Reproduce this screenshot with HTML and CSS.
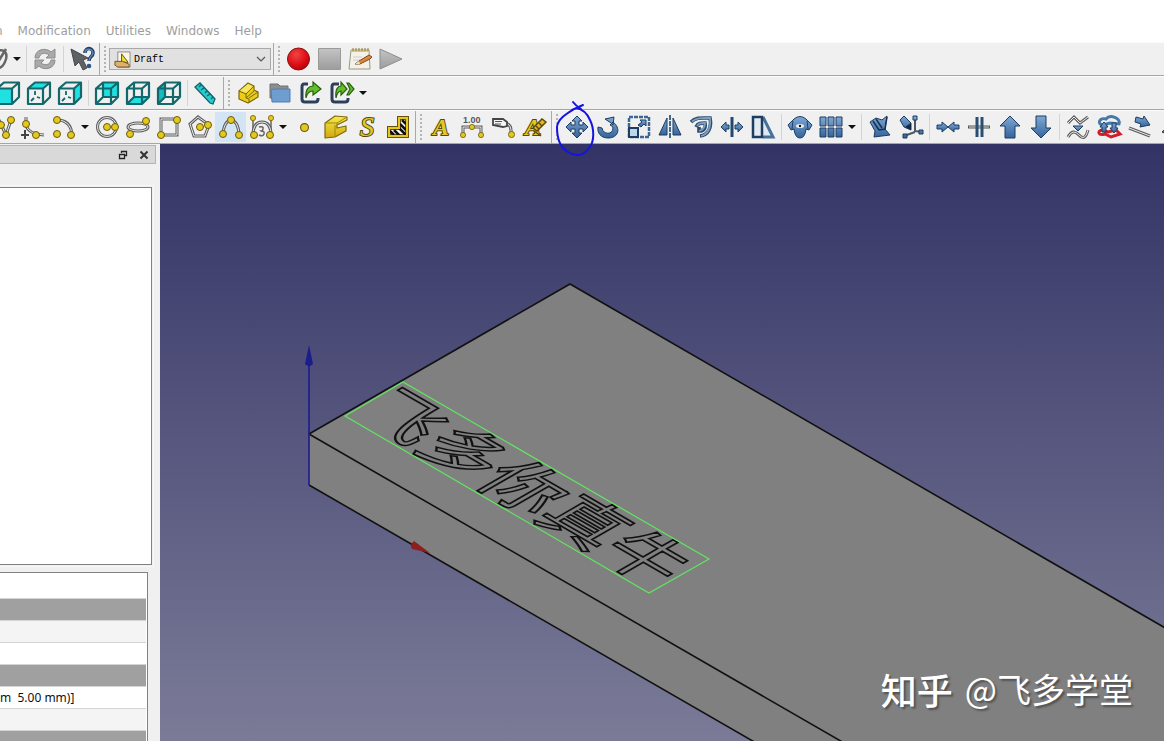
FILE: index.html
```html
<!DOCTYPE html>
<html lang="en">
<head>
<meta charset="utf-8">
<title>Draft workbench</title>
<link rel="stylesheet" href="styles.css">
</head>
<body>
<svg class="defs" aria-hidden="true">
  <defs>
    <symbol id="node" viewBox="0 0 8 8"><circle cx="4" cy="4" r="3.500" fill="#e3c81f" stroke="#6b5a0b" stroke-width="1"/></symbol>
    <symbol id="frame" viewBox="0 0 26 26"><path d="M2 8.500H17V24H2ZM9 2.500H24V17H9ZM2 8.500L9 2.500M17 8.500L24 2.500M17 24L24 17M2 24L9 17" fill="none" stroke="#12686a" stroke-width="2.200" stroke-linejoin="round"/></symbol>
    <symbol id="shell" viewBox="0 0 26 26"><path d="M2 8.500H17V24H2ZM2 8.500L9 2.500H24V17L17 24M17 8.500L24 2.500" fill="none" stroke="#12686a" stroke-width="2.200" stroke-linejoin="round"/></symbol>
    <linearGradient id="sky" x1="0" y1="0" x2="0" y2="1"><stop offset="0" stop-color="#333366"/><stop offset="1" stop-color="#7b7b98"/></linearGradient>
    <linearGradient id="steel" x1="0" y1="0" x2="0" y2="1"><stop offset="0" stop-color="#7fa9d6"/><stop offset="1" stop-color="#34649c"/></linearGradient>
    <linearGradient id="gold" x1="0" y1="0" x2="0" y2="1"><stop offset="0" stop-color="#f7e94a"/><stop offset="1" stop-color="#d0a80c"/></linearGradient>
    <linearGradient id="grey" x1="0" y1="0" x2="0" y2="1"><stop offset="0" stop-color="#c4c4c4"/><stop offset="1" stop-color="#9c9c9c"/></linearGradient>
    <radialGradient id="red" cx=".4" cy=".3" r=".8"><stop offset="0" stop-color="#f04444"/><stop offset=".6" stop-color="#dc0d14"/><stop offset="1" stop-color="#a80008"/></radialGradient>
  </defs>
</svg>

<div class="app">
  <nav class="menubar">
    <button class="menu menu-first">n</button>
    <button class="menu">Modification</button>
    <button class="menu">Utilities</button>
    <button class="menu">Windows</button>
    <button class="menu">Help</button>
  </nav>

  <div class="toolbar bar-file">
    <button class="tool" aria-label="Undo"><svg viewBox="0 0 26 26"><path d="M13 6C19 2 25 5 23 13C21 20 17 24 11 21M23 3L15 16" fill="none" stroke="#666" stroke-width="2.500"/></svg></button>
    <button class="more" aria-label="Undo history"></button>
    <span class="sep"></span>
    <button class="tool" aria-label="Refresh"><svg viewBox="0 0 26 26"><path d="M3 12C3 3 14 1 19 6L23 3V12H14L17 9C13 6 8 7 7 12Z" fill="#aaa" stroke="#8c8c8c"/><path d="M23 14C23 23 12 25 7 20L3 23V14H12L9 17C13 20 18 19 19 14Z" fill="#aaa" stroke="#8c8c8c"/></svg></button>
    <span class="sep"></span>
    <button class="tool" aria-label="What's this"><svg viewBox="0 0 26 26"><path d="M2 3L6 20L10 16L14 24L18 22L14 14L19 12Z" fill="#5e6264" stroke="#46494b"/><path d="M16 7C16 1 24 1 24 7C24 11 20 10 20 15" fill="none" stroke="#213c60" stroke-width="3.500"/><path d="M16 7C16 2 23 2 24 7C24 10 20 10 20 15" fill="none" stroke="#6189b8" stroke-width="1.300"/><circle cx="20" cy="20" r="2.300" fill="#315680"/></svg></button>
    <span class="handle"></span>
    <label class="workbench">
      <svg viewBox="0 0 18 18"><path d="M4 1H17V17H4Z" fill="#f7f6e9" stroke="#888"/><path d="M8 3V12H15Z" fill="#f1dc27" stroke="#635411"/><path d="M1 11H9L16 14V17H4L1 15Z" fill="#ddb36c" stroke="#76501e"/></svg>
      <select aria-label="Workbench"><option>Draft</option></select>
      <svg class="chevron" viewBox="0 0 10 6"><path d="M1 1L5 5L9 1" fill="none" stroke="#555" stroke-width="1.200"/></svg>
    </label>
    <span class="handle"></span>
    <button class="tool" aria-label="Record macro"><svg viewBox="0 0 26 26"><circle cx="12.500" cy="13" r="11" fill="url(#red)" stroke="#8d1014"/></svg></button>
    <button class="tool" aria-label="Stop macro"><svg viewBox="0 0 26 26"><path d="M1.500 2.500H23.500V23.500H1.500Z" fill="url(#grey)" stroke="#9a9a9a"/></svg></button>
    <button class="tool" aria-label="Macros"><svg viewBox="0 0 26 26"><path d="M3 4H21L22 23H1Z" fill="#f4f2e8" stroke="#999783"/><path d="M3 3H21V6H3Z" fill="#d8c67d"/><path d="M5 2V5M8 2V5M11 2V5M14 2V5M17 2V5M20 2V5" stroke="#8a7b4c"/><path d="M5 11H14M5 14H12" stroke="#ccc"/><path d="M7 18L11 15L21 9L24 11L22 13L12 18Z" fill="#d9883e" stroke="#7f4920"/><path d="M7 18L11 15L12 18Z" fill="#eee0b7"/></svg></button>
    <button class="tool" aria-label="Run macro"><svg viewBox="0 0 26 26"><path d="M1 3L23 13L1 23Z" fill="url(#grey)" stroke="#8d8d8d"/></svg></button>
  </div>

  <div class="toolbar bar-view">
    <button class="tool" aria-label="Front"><svg viewBox="0 0 26 26"><path d="M2 8.500H17V24H2Z" fill="#21e0e2"/><use href="#shell"/></svg></button>
    <button class="tool" aria-label="Top"><svg viewBox="0 0 26 26"><path d="M2 8.500L9 2.500H24L17 8.500Z" fill="#21e0e2"/><use href="#shell"/><path d="M9 11V15M5 21L8 18M11 17L14 18" stroke="#12686a" stroke-width="1.800"/></svg></button>
    <button class="tool" aria-label="Right"><svg viewBox="0 0 26 26"><path d="M17 8.500L24 2.500V17L17 24Z" fill="#21e0e2"/><use href="#shell"/><path d="M9 11V15M5 21L8 18M11 17L14 18" stroke="#12686a" stroke-width="1.800"/></svg></button>
    <span class="sep"></span>
    <button class="tool" aria-label="Rear"><svg viewBox="0 0 26 26"><path d="M9 2.500H24V17H9Z" fill="#21dfe1"/><use href="#frame"/></svg></button>
    <button class="tool" aria-label="Bottom"><svg viewBox="0 0 26 26"><path d="M2 24L9 17H24L17 24Z" fill="#21dfe1"/><use href="#frame"/></svg></button>
    <button class="tool" aria-label="Left"><svg viewBox="0 0 26 26"><path d="M2 8.500L9 2.500V17L2 24Z" fill="#18b9bb"/><use href="#frame"/></svg></button>
    <span class="sep"></span>
    <button class="tool" aria-label="Measure"><svg viewBox="0 0 26 26"><path d="M2 7L7 3L22 19L20 24L17 23Z" fill="#27cbd0" stroke="#0b666b" stroke-width="1.300"/><path d="M8 5L6 7M11 8L8 10M14 11L12 13M17 14L14 16M20 17L18 19" stroke="#0b666b" stroke-width="1.300"/></svg></button>
    <span class="handle"></span>
    <button class="tool" aria-label="Part"><svg viewBox="0 0 26 26"><path d="M3 11L12 3L18 6V10L22 12V17L12 23L3 19Z" fill="#edcd1c" stroke="#7a680f" stroke-width="1.200" stroke-linejoin="round"/><path d="M4 10.500L12 4L17 6.500L10 13Z" fill="#f7e65d"/><path d="M3 11L10 14V18L13 19V23M10 14L18 6M13 18L22 12M10 18L18 11" fill="none" stroke="#7a680f"/></svg></button>
    <button class="tool" aria-label="Group"><svg viewBox="0 0 26 26"><path d="M3 4H11L13 6H21V18H3Z" fill="#8d8d8d" stroke="#707070"/><path d="M4 10L7 9H23V22H5Z" fill="#6e9dd0" stroke="#4f7fb3"/></svg></button>
    <button class="tool" aria-label="Link"><svg viewBox="0 0 26 26"><path d="M10 4H6Q4 4 4 7V19Q4 22 7 22H17Q20 22 20 19V18" fill="none" stroke="#2c405c" stroke-width="3"/><path d="M8 18C7 9 11 6 15 6V2L23 9L15 15V11C11 11 9 13 8 18Z" fill="#65bd2c" stroke="#26600d" stroke-width="1.200"/></svg></button>
    <button class="tool" aria-label="Link actions"><svg viewBox="0 0 26 26"><path d="M10 4H5Q3 4 3 7V19Q3 22 6 22H16Q19 22 19 19V18" fill="none" stroke="#2c405c" stroke-width="3"/><path d="M7 18C6 9 9 6 12 6V2L18 9L12 15V11C9 11 8 13 7 18ZM18 3L20 3L25 9L20 15H18L21 9Z" fill="#65bd2c" stroke="#26600d" stroke-width="1.200"/></svg></button>
    <button class="more" aria-label="More link actions"></button>
  </div>

  <div class="toolbar bar-draft">
    <button class="tool" aria-label="Wire"><svg viewBox="0 0 26 26"><path class="tube" d="M10 6L17 21L22 6"/><path class="core" d="M10 6L17 21L22 6"/><use href="#node" x="13" y="17" width="8" height="8"/><use href="#node" x="18" y="2" width="8" height="8"/><use href="#node" x="8" y="7" width="8" height="8"/></svg></button>
    <button class="tool" aria-label="Fillet"><svg viewBox="0 0 26 26"><path class="tube" d="M6 3V11Q8 20 24 21"/><path class="core" d="M6 3V11Q8 20 24 21"/><path d="M5 16V25M1 21H9" stroke="#444" stroke-width="2"/><use href="#node" x="2" y="6" width="8" height="8"/><use href="#node" x="12" y="17" width="8" height="8"/></svg></button>
    <button class="tool" aria-label="Arc"><svg viewBox="0 0 26 26"><path class="tube" d="M6 6Q20 6 21 21"/><path class="core" d="M6 6Q20 6 21 21"/><use href="#node" x="2" y="2" width="8" height="8"/><use href="#node" x="2" y="16" width="8" height="8"/><use href="#node" x="16" y="17" width="8" height="8"/></svg></button>
    <button class="more" aria-label="Arc tools"></button>
    <button class="tool" aria-label="Circle"><svg viewBox="0 0 26 26"><circle class="tube" cx="13" cy="13" r="9.500"/><circle class="core" cx="13" cy="13" r="9.500"/><use href="#node" x="9" y="9" width="8" height="8"/><use href="#node" x="17" y="9" width="8" height="8"/></svg></button>
    <button class="tool" aria-label="Ellipse"><svg viewBox="0 0 26 26"><ellipse class="tube" cx="13" cy="13" rx="10" ry="4"/><ellipse class="core" cx="13" cy="13" rx="10" ry="4"/><use href="#node" x="17" y="3" width="8" height="8"/><use href="#node" x="1" y="16" width="8" height="8"/></svg></button>
    <button class="tool" aria-label="Rectangle"><svg viewBox="0 0 26 26"><path class="tube" d="M5 5H21V21H5Z"/><path class="core" d="M5 5H21V21H5Z"/><use href="#node" x="17" y="2" width="8" height="8"/><use href="#node" x="1" y="17" width="8" height="8"/></svg></button>
    <button class="tool" aria-label="Polygon"><svg viewBox="0 0 26 26"><path class="tube" d="M11 3L22 11L18 22H7L3 10Z"/><path class="core" d="M11 3L22 11L18 22H7L3 10Z"/><use href="#node" x="9" y="9" width="8" height="8"/><use href="#node" x="17" y="7" width="8" height="8"/></svg></button>
    <button class="tool tool-on" aria-label="B-spline"><svg viewBox="0 0 26 26"><path class="tube" d="M5 20Q6 7 13 6Q20 7 21 20"/><path class="core" d="M5 20Q6 7 13 6Q20 7 21 20"/><use href="#node" x="9" y="2" width="8" height="8"/><use href="#node" x="1" y="16" width="8" height="8"/><use href="#node" x="17" y="17" width="8" height="8"/></svg></button>
    <button class="tool" aria-label="Bezier"><svg viewBox="0 0 26 26"><path d="M4 4V21M22 4V21" stroke="#666" stroke-width="1.500"/><path class="tube" d="M4 21Q4 8 13 8Q22 8 22 21"/><path class="core" d="M4 21Q4 8 13 8Q22 8 22 21"/><path d="M10 13Q15 12 14 15T12 17Q16 17 15 20T10 21" fill="none" stroke="#666" stroke-width="1.500"/><use href="#node" x="1" y="1" width="6" height="6"/><use href="#node" x="19" y="1" width="6" height="6"/><use href="#node" x="1" y="17" width="8" height="8"/><use href="#node" x="17" y="17" width="8" height="8"/></svg></button>
    <button class="more" aria-label="Bezier tools"></button>
    <button class="tool" aria-label="Point"><svg viewBox="0 0 26 26"><use href="#node" x="8" y="9" width="9" height="9"/></svg></button>
    <button class="tool" aria-label="Facebinder"><svg viewBox="0 0 26 26"><path d="M2 9L12 2L24 3V6L14 11V14L23 12V17L12 23L2 24Z" fill="url(#gold)" stroke="#7d6a10" stroke-width="1.200" stroke-linejoin="round"/><path d="M2 9L14 9L24 3M14 9V11M12 23V11" fill="none" stroke="#a18611"/></svg></button>
    <button class="tool" aria-label="Shape from text"><svg viewBox="0 0 26 26"><text class="letter letter-thin" x="6" y="22">S</text></svg></button>
    <button class="tool" aria-label="Hatch"><svg viewBox="0 0 26 26"><path d="M14 4H22V22H4V14H14Z" fill="#fff" stroke="#65540b" stroke-width="4"/><path d="M17 6L21 10M15 10L21 16M14 14L21 21M9 16L15 22M5 17L9 21" stroke="#111" stroke-width="2.500"/><path d="M14 4H22V22H4V14H14Z" fill="none" stroke="#e5c720" stroke-width="2"/></svg></button>
    <span class="handle"></span>
    <button class="tool" aria-label="Text"><svg viewBox="0 0 26 26"><text class="letter" x="5" y="21">A</text></svg></button>
    <button class="tool" aria-label="Dimension"><svg viewBox="0 0 26 26"><text class="tiny" x="4" y="9">1.00</text><path class="tube" d="M4 21V13H22V21"/><path class="core" d="M4 21V13H22V21"/><use href="#node" x="10" y="10" width="6" height="6"/><use href="#node" x="1" y="18" width="6" height="6"/><use href="#node" x="19" y="18" width="6" height="6"/></svg></button>
    <button class="tool" aria-label="Label"><svg viewBox="0 0 26 26"><path class="tube" d="M15 9Q22 10 21 20"/><path class="core" d="M15 9Q22 10 21 20"/><path d="M3 5H13L17 8V12L13 13L3 11Z" fill="#f4f4f4" stroke="#444" stroke-width="1.800"/><path d="M5 7.500H12M5 10H11" stroke="#555"/><use href="#node" x="18" y="17" width="7" height="7"/></svg></button>
    <button class="tool" aria-label="Annotation styles"><svg viewBox="0 0 26 26"><text class="letter" x="4" y="21">A</text><path d="M12 14L21 5L25 8L16 17Z" fill="#ddb727" stroke="#584807" stroke-width="1.400"/><path d="M15 12L18 15M18 9L21 12M13 17L20 22" stroke="#584807" stroke-width="1.400"/></svg></button>
    <span class="handle"></span>
    <button class="tool" aria-label="Move"><svg viewBox="0 0 26 26"><path class="steel" d="M13 2L18 7H15V11H19V8L24 13L19 18V15H15V19H18L13 24L8 19H11V15H7V18L2 13L7 8V11H11V7H8Z"/></svg></button>
    <button class="tool" aria-label="Rotate"><svg viewBox="0 0 26 26"><path class="steel" d="M10 5L19 3L18 11L16 9ZM18 8C26 14 24 24 13 24C6 24 2 19 3 13L7 14C8 21 18 21 18 14Q18 12 15 11Z"/></svg></button>
    <button class="tool" aria-label="Scale"><svg viewBox="0 0 26 26"><path d="M3 3H23V23H3Z" fill="none" stroke="#3c6794" stroke-width="2.500" stroke-dasharray="4 1"/><path d="M3 14H12V23H3Z" fill="#c0d5ea" stroke="#1c3d62" stroke-width="2"/><path class="steel" d="M12 11L16 8L14 6H20V12L18 10L15 13Z"/></svg></button>
    <button class="tool" aria-label="Mirror"><svg viewBox="0 0 26 26"><path class="steel" d="M10 4V21H2ZM16 4V21H24Z"/><path d="M13 1V25" stroke="#3f688f" stroke-width="2" stroke-dasharray="5 1"/></svg></button>
    <button class="tool" aria-label="Offset"><svg viewBox="0 0 26 26"><path d="M3 8C8 3 14 4 22 4C24 14 20 21 12 22M8 13C10 9 13 9 17 9C18 14 16 17 11 17L11 13" fill="none" stroke="#2b4a6c" stroke-width="3.600"/><path d="M4 7.500C9 3.500 14 4 22 4C23 14 20 20 13 22M9 12C11 9 13 9 17 9C17 14 15 16 11 17" fill="none" stroke="#7f9fc0" stroke-width="1.800"/></svg></button>
    <button class="tool" aria-label="Trimex"><svg viewBox="0 0 26 26"><path d="M13 3V23" stroke="#23486e" stroke-width="3"/><path class="steel" d="M2 13L7 8V11H10V15H7V18ZM24 13L19 8V11H16V15H19V18Z"/></svg></button>
    <button class="tool" aria-label="Stretch"><svg viewBox="0 0 26 26"><path d="M13 3L23 23H13" fill="#dfe8f1" stroke="#46719d" stroke-width="3"/><path d="M3 3H12V23H3Z" fill="#e4eaf1" stroke="#1d3d61" stroke-width="2.500"/></svg></button>
    <span class="sep"></span>
    <button class="tool" aria-label="Clone"><svg viewBox="0 0 26 26"><path class="steel" d="M7 5Q13 0 19 5L25 11L22 16L19 15Q18 24 13 24T7 15L4 16L1 11Z"/><path d="M6 7L5 15M20 7L21 15" stroke="#1f416a"/><ellipse cx="13" cy="12" rx="4" ry="2" fill="#eee"/><circle cx="13" cy="12" r="1.200" fill="#111"/></svg></button>
    <button class="tool" aria-label="Array"><svg viewBox="0 0 26 26"><path class="steel" d="M2 3H8V12H2ZM10 3H16V12H10ZM18 3H24V12H18ZM2 14H8V23H2ZM10 14H16V23H10ZM18 14H24V23H18Z"/></svg></button>
    <button class="more" aria-label="Array tools"></button>
    <span class="sep"></span>
    <button class="tool" aria-label="Edit"><svg viewBox="0 0 26 26"><path class="steel" d="M20 2L18 15L23 21L7 23L8 17L3 8L9 4L15 6Z"/><path d="M9 5L15 14M6 7L12 16M20 3L18 15L12 16" fill="none" stroke="#17304e" stroke-width="1.500"/></svg></button>
    <button class="tool" aria-label="Subelement"><svg viewBox="0 0 26 26"><path d="M17 4V17L23 18M17 18L6 22" fill="none" stroke="#4d5964" stroke-width="2"/><path class="steel" d="M2 6L6 2L13 9L13 16L6 13Z"/><path d="M7 13L13 9L13 16Z" fill="#142942"/><path class="steel" d="M15 2H19V6H15ZM21 16H25V20H21ZM5 20H9V24H5Z"/></svg></button>
    <span class="sep"></span>
    <button class="tool" aria-label="Join"><svg viewBox="0 0 26 26"><path class="steel" d="M2 11H7V8L13 13L19 8V11H24V15H19V18L13 13L7 18V15H2Z"/></svg></button>
    <button class="tool" aria-label="Split"><svg viewBox="0 0 26 26"><path d="M2 13H24" stroke="#555" stroke-width="3"/><path d="M3 13H23" stroke="#ddd"/><path d="M11 3V23M16 3V23" stroke="#294e76" stroke-width="3"/></svg></button>
    <button class="tool" aria-label="Upgrade"><svg viewBox="0 0 26 26"><path class="steel" d="M13 2L23 12H18V24H8V12H3Z"/></svg></button>
    <button class="tool" aria-label="Downgrade"><svg viewBox="0 0 26 26"><path class="steel" d="M13 24L3 14H8V2H18V14H23Z"/></svg></button>
    <span class="sep"></span>
    <button class="tool" aria-label="Wire to B-spline"><svg viewBox="0 0 26 26"><path class="tube" d="M3 9L9 3L15 9L23 3M3 23Q8 14 14 21T23 16"/><path class="core" d="M3 9L9 3L15 9L23 3M3 23Q8 14 14 21T23 16"/><path class="steel" d="M8 12H18L13 17Z"/></svg></button>
    <button class="tool" aria-label="Draft to sketch"><svg viewBox="0 0 26 26"><path d="M7 11C0 10 4 3 10 5C14 0 25 4 23 10L14 9L7 11" fill="none" stroke="#4778a9" stroke-width="3"/><path d="M6 16C1 17 2 22 9 20L15 23L24 20L20 16L12 18Z" fill="none" stroke="#d11d26" stroke-width="3"/><path class="steel" d="M8 8L12 13H10V18H6V13H4ZM18 19L14 14H16V9H20V14H22Z"/></svg></button>
    <button class="tool" aria-label="Slope"><svg viewBox="0 0 26 26"><path class="tube" d="M2 14L23 22"/><path class="core" d="M2 14L23 22"/><path class="steel" d="M9 3L16 5L17 2L23 11L13 13L14 10L8 8Z"/></svg></button>
    <button class="tool" aria-label="Flip dimension"><svg viewBox="0 0 26 26"><path class="steel" d="M6 8L11 3V10H8ZM4 18L9 13L13 22Z"/></svg></button>
  </div>

  <main class="work">
    <aside class="side">
      <header class="dock">
        <button class="dock-btn" aria-label="Float"><svg viewBox="0 0 10 10"><path d="M3.500 3V1.500H8.500V5.500H7M1.500 4.500H6.500V8.500H1.500Z" fill="none" stroke="#222" stroke-width="1.300"/></svg></button>
        <button class="dock-btn" aria-label="Close"><svg viewBox="0 0 10 10"><path d="M1.500 1.500L8.500 8.500M8.500 1.500L1.500 8.500" stroke="#333" stroke-width="2"/></svg></button>
      </header>
      <div class="tree"></div>
      <div class="props">
        <table>
          <tbody>
            <tr class="blank"><td></td></tr>
            <tr class="group"><td></td></tr>
            <tr class="alt"><td></td></tr>
            <tr><td></td></tr>
            <tr class="group"><td></td></tr>
            <tr><td>m&nbsp; 5.00 mm)]</td></tr>
            <tr class="alt"><td></td></tr>
            <tr class="group"><td></td></tr>
          </tbody>
        </table>
      </div>
    </aside>

    <section class="view">
      <svg class="scene" viewBox="160 144 1004 597" preserveAspectRatio="xMinYMin slice">
        <path d="M160 144H1164V741H160Z" fill="url(#sky)"/>
        <path d="M570 284L1174 633V751H770L309 485V434Z" fill="#808080"/>
        <path d="M309 434L570 284L1174 633M309 434L858 751M309 485L770 751" fill="none" stroke="#111" stroke-width="1.600"/>
        <path d="M309 485V360" stroke="#1c1c8c" stroke-width="1.600"/>
        <path d="M309 345L313 364Q309 368 305 364Z" fill="#1c1c8c"/>
        <path d="M414 541L430 553L412 549Q409 545 414 541Z" fill="#8c2020"/>
        <text class="engraved" transform="matrix(.866 .5 -.866 .5 345 416)" x="0" y="-7">飞多你真牛</text>
        <path d="M345 416L403 382L709 559L649 593Z" fill="none" stroke="#5fe65f" stroke-width="1.200"/>
      </svg>
      <p class="credit"><b>知乎</b><span>@飞多学堂</span></p>
    </section>
  </main>

  <svg class="pen" viewBox="0 0 44 60" aria-hidden="true"><path d="M18 4Q21 8 26 11M17 12L28 7M21 10C13 15 3 20 2 29C2 38 4 49 13 54C20 59 29 58 34 50C40 43 39 30 35 22C32 15 27 11 21 10" fill="none" stroke="#1414e0" stroke-width="2" stroke-linecap="round"/></svg>
</div>
</body>
</html>
```
FILE: styles.css
```css
* { box-sizing: border-box; }
body {
  margin: 0;
  background: #f0f0f0;
  font-family: "Noto Sans", "Noto Sans CJK SC", sans-serif;
  font-size: 12px;
  color: #111;
}
button {
  padding: 0;
  border: 0;
  background: none;
  font: inherit;
  color: inherit;
}
.defs { position: absolute; width: 0; height: 0; }
.app {
  position: relative;
  display: flex;
  flex-direction: column;
  height: 100vh;
  overflow: hidden;
}

.menubar {
  display: flex;
  flex: none;
  gap: 15px;
  height: 42px;
  padding-top: 21px;
  background: #fff;
  color: #9e9e9e;
  font-family: "DejaVu Sans", sans-serif;
  line-height: 20px;
}
.menu { display: block; height: 20px; }
.menu-first { margin-left: -5px; }

.toolbar {
  display: flex;
  flex: none;
  align-items: center;
  height: 34px;
  border-top: 1px solid #fbfbfb;
  border-bottom: 1px solid #a6a6a6;
  background: #f0f0f0;
  overflow: hidden;
}
.bar-file > :first-child { margin-left: -20px; }
.bar-view > :first-child { margin-left: -8px; }
.bar-draft > :first-child { margin-left: -14px; }
.tool {
  display: grid;
  place-items: center;
  flex: none;
  width: 31px;
  height: 30px;
}
.tool svg { width: 26px; height: 26px; overflow: visible; }
.tool-on { background: #d3e4f4; }
.more {
  display: grid;
  place-items: center;
  flex: none;
  width: 12px;
  height: 30px;
}
.more::before {
  content: "";
  border: 4px solid transparent;
  border-top-color: #111;
  border-bottom: 0;
}
.sep {
  flex: none;
  width: 6px;
  height: 26px;
  background: linear-gradient(#d4d4d4, #d4d4d4) 3px 0 / 1px 100% no-repeat;
}
.handle {
  flex: none;
  align-self: stretch;
  width: 12px;
  background:
    linear-gradient(#a8a8a8, #a8a8a8) 2px 0 / 1px 100% no-repeat,
    repeating-linear-gradient(#b4b4b4 0 2px, transparent 2px 4px) 7px 3px / 2px 26px no-repeat;
}

.tube { fill: none; stroke: #5e5e5e; stroke-width: 3; }
.core { fill: none; stroke: #eaeaea; stroke-width: 1; }
.steel { fill: url(#steel); stroke: #1d3c61; stroke-width: 1; stroke-linejoin: round; }
.tiny { font: bold 9px "Liberation Sans", sans-serif; fill: #555; }
.letter {
  font: italic bold 24px "Liberation Serif", serif;
  fill: #e0ca2a;
  stroke: #584807;
  stroke-width: 2px;
  paint-order: stroke;
}
.letter-thin { font-size: 28px; font-weight: normal; }

.workbench {
  display: flex;
  flex: none;
  align-items: center;
  gap: 3px;
  width: 162px;
  height: 22px;
  padding: 0 4px;
  border: 1px solid #a9a9a9;
  background: #e1e1e1;
}
.workbench svg { flex: none; width: 17px; height: 17px; }
.workbench .chevron { width: 10px; height: 6px; }
.workbench select {
  flex: 1;
  min-width: 0;
  padding: 0;
  border: 0;
  appearance: none;
  background: none;
  font: 10px "Liberation Mono", monospace;
  color: #000;
}

.work { display: flex; flex: 1; min-height: 0; }
.side {
  display: flex;
  flex: none;
  flex-direction: column;
  width: 160px;
  padding: 1px 4px 0 0;
}
.dock {
  display: flex;
  flex: none;
  align-items: center;
  justify-content: flex-end;
  gap: 11px;
  height: 19px;
  padding-right: 6px;
  border: 1px solid #b4b4b4;
  border-left: 0;
  background: #d9d9d9;
}
.dock-btn { display: grid; width: 10px; height: 10px; }
.tree {
  flex: 1;
  min-height: 0;
  margin: 23px 4px 7px 0;
  border: 1px solid #828282;
  border-left: 0;
  background: #fff;
  outline: 1px solid #f7f7f7;
  outline-offset: 1px;
}
.props {
  flex: none;
  height: 169px;
  margin-right: 8px;
  border: 1px solid #828282;
  border-width: 1px 1px 0 0;
  padding-right: 1px;
  background: #fff;
  overflow: hidden;
}
.props table { width: 100%; border-collapse: collapse; }
.props tr { height: 22px; border-bottom: 1px solid #d4d4d4; }
.props td { padding: 0; line-height: 21px; white-space: nowrap; }
.props .blank { height: 25px; }
.props .group { background: #a0a0a0; }
.props .alt { background: #f4f4f4; }

.view { position: relative; flex: 1; min-width: 0; overflow: hidden; }
.scene { display: block; width: 100%; height: 100%; }
.engraved {
  font: 400 70px "Noto Sans CJK SC", sans-serif;
  fill: #808080;
  stroke: #111;
  stroke-width: 2px;
}
.credit {
  position: absolute;
  right: 31px;
  bottom: 27px;
  display: flex;
  gap: 12px;
  margin: 0;
  font-family: "Noto Sans CJK SC", sans-serif;
  font-size: 34px;
  line-height: 50px;
  color: #fff;
  text-shadow: 2px 2px 2px #505050;
}
.credit b { font-size: 36px; font-weight: 500; }
.pen { position: absolute; left: 555px; top: 98px; width: 44px; height: 60px; pointer-events: none; }
```
